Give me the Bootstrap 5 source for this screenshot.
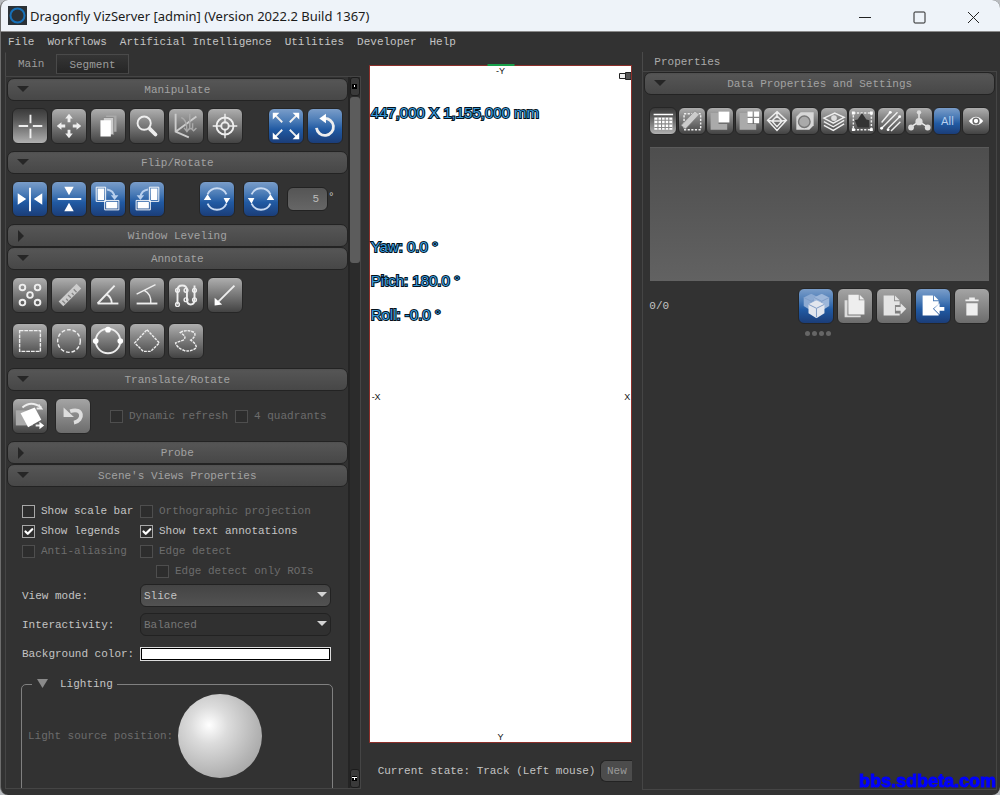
<!DOCTYPE html>
<html lang="en">
<head>
<meta charset="utf-8">
<meta name="viewport" content="width=device-width, initial-scale=1">
<title>Dragonfly VizServer</title>
<link href="https://cdn.jsdelivr.net/npm/bootstrap@5.3.0/dist/css/bootstrap.min.css" rel="stylesheet">
<style>
:root{--ink:#c4c4c4;--dim:#6c6c6c;--soft:#9c9c9c;--base:#323232;--line:#4a4a4a}
body{font:11px/16px "Liberation Mono",monospace;color:var(--ink);background:#b9bcc0}
.window{height:100vh;background:var(--base);border-left:1px solid #6d6d6d;border-radius:8px;overflow:hidden}
.titlebar{height:32px;background:#eef3f9;color:#1b1b1b;font:13px/20px "Noto Sans",sans-serif;padding-left:7px;border-bottom:1px solid #8a8a8a}
.titlebar svg.logo{margin-right:3px}
.winbtn{width:54px;height:31px;border:0;background:none;padding:0;color:#1b1b1b}
.menubar{height:20px;gap:13px;padding:2px 7px 0}
.menubar a{color:var(--ink);text-decoration:none}
.workspace{display:grid;grid-template-columns:36fr 28fr 36fr;min-height:0}
.leftpane{padding:0 0 6px 4px}
.tabrow{height:24px}
.tabrow button{border:1px solid var(--line);background:none;color:var(--soft);padding:0 12px;height:24px;line-height:23px;border-bottom:0;border-top-color:transparent}
.tabrow .second{height:20px;line-height:20px;margin-top:2px;border-color:var(--line);background:linear-gradient(#353535,#262626);border-bottom:1px solid #444}
.tabrow .first{padding:0 12px;border-right:0}
.framed{border:1px solid #454545;min-height:0}
.stack{padding:1px 0 0 1px;min-width:0;overflow:hidden}
.sechead{height:23px;flex:none;width:100%;border:1px solid #232323;border-radius:7px;background:linear-gradient(#505050,#555 10%,#474747);color:#a2a2a2;padding:0 9px;line-height:20px}
.sechead span{flex:1}
.arrow{width:12px;height:12px;flex:none;fill:#262626;margin-right:-12px}
.tools{height:50px;padding:7px 5px;gap:3px;flex:none}
.tools.tall{height:98px;gap:10px}
.toolrow{gap:3px}
.tool{width:36px;height:36px;flex:none;padding:0;border:1px solid #262626;border-radius:6px;background:linear-gradient(#aeaeae,#888 35%,#434343);color:#eee}
.tool svg{width:34px;height:34px;display:block}
.tool.blue{background:linear-gradient(#7a9dc9,#4a7bb6 35%,#215aa3 60%,#1b3d78)}
.tool.down{background:linear-gradient(#3a3a3a,#555 30%,#b0b0b0)}
.tool.flat{background:linear-gradient(#a4a4a4,#6c6c6c)}
.tool.mini{width:28px;height:28px}
.tool.mini svg{width:26px;height:26px}
.tool.alltext{font-family:Lato,sans-serif;color:#b9d0ee}
svg .s{fill:none;stroke:currentColor;stroke-width:2}
.angle{width:41px;height:24px;border:1px solid #222;border-radius:6px;background:linear-gradient(#555,#666);color:#bbb;text-align:right;padding:0 8px}
.degree{align-self:flex-start;margin-top:8px}
.tick{min-height:20px;padding:0;margin:0;display:flex;align-items:center;gap:6px;color:var(--ink)}
.tick .form-check-input{float:none;margin:0;width:13px;height:13px;border-radius:0;border:1px solid #a8a8a8;background-color:#2d2d2d;background-size:15px;flex:none}
.tick .form-check-input:disabled{border-color:#4e4e4e;opacity:1}
.tick .form-check-input:disabled~label{opacity:1;color:var(--dim)}
.options{padding:14px 17px 0 15px}
.checks,.fields{display:grid;grid-template-columns:118px 1fr}
.fields{margin-top:3px;row-gap:6px;grid-auto-rows:23px;align-items:center}
.combo{height:23px;border:1px solid #222;border-radius:6px;color:var(--ink);padding:0 20px 0 3px;appearance:none;font-size:11px;line-height:20px;background:linear-gradient(#444,#525252)}
.combo:disabled{background:#303030;color:#777;opacity:1}
.combowrap{position:relative}
.combowrap svg{position:absolute;right:4px;top:7px;width:10px;height:8px;fill:#d4d4d4;pointer-events:none}
.swatch{height:14px;border:1px solid #ddd;background:#fff;box-shadow:inset 0 0 0 1px #000;padding:0}
.lighting{border:1px solid #808080;border-radius:5px;margin:11px -2px 0 -1px;padding:2px 6px 30px}
.lighting legend{float:none;width:auto;font-size:11px;line-height:16px;margin:0 0 0 4px;padding:0 4px 0 2px;color:var(--ink)}
.lighting legend svg{margin-right:10px}
.source{color:var(--dim);gap:5px}
.ball{width:84px;height:84px;border-radius:50%;background:radial-gradient(circle at 37% 37%,#fff,#dcdcdc 25%,#b4b4b4 65%,#949494)}
.scroller{width:12px;background:#2b2b2b;border-left:2px solid #242424;flex:none}
.scroller .end{height:19px;border:1px solid #1c1c1c;border-radius:3px;background:#3a3a3a;padding:0;line-height:0}
.scroller .thumb{height:166px;margin-top:1px;background:#5c5c5c;border-radius:3px}
.viewpane{padding:13px 8px 5px}
.view{position:relative;background:#fff;border:1px solid #8c2f2a;color:#111;font:9px/10px "Liberation Sans",sans-serif}
.view .mark-n{position:absolute}
.north{left:50%;top:0;transform:translateX(-50%)}
.north::before{content:"";position:absolute;width:27px;height:2px;left:50%;margin-left:-13px;top:-2px;background:#18a04a}
.south{left:50%;bottom:0;transform:translateX(-50%)}
.west{left:2px;top:50%;margin-top:-12px}
.east{right:1px;top:50%;margin-top:-12px}
.cam{right:0;top:6px;width:12px;height:8px}
.readout{font:15px/34px "Liberation Sans",sans-serif;color:#3a9bdc;-webkit-text-stroke:2px #04121c;padding:30px 0 0 1px;paint-order:stroke fill}
.readout .spin{margin-top:100px}
.status{height:47px;padding:17px 0 0 9px;flex:none;align-items:flex-start}
.status .state{line-height:22px}
.newbtn{width:32px;height:22px;border:1px solid #232323;border-right:0;border-radius:6px 0 0 6px;background:#4c4c4c;color:#999;padding:0}
.rightpane{padding:0 3px 5px 2px}
.proptab{height:19px;padding-left:11px;border-left:1px solid var(--line);line-height:20px;color:#aaa}
.rightbody{padding:0 1px}
.pad{padding:12px 5px 0}
.mtools{margin-bottom:12px}
.objects{height:134px;margin:0 1px;background:linear-gradient(#4e4e4e,#626262);border-top:1px solid #5a5a5a}
.actions{gap:3px;margin-top:7px}
.dots i{width:5px;height:5px;border-radius:50%;background:#666}
.dots{gap:2px;padding:7px 0 0 156px}
.site{position:fixed;right:4px;bottom:1px;font:bold 18px/26px "Liberation Sans",sans-serif;color:#00f;-webkit-text-stroke:1px #00f}
</style>
</head>
<body>
<svg class="d-none" xmlns="http://www.w3.org/2000/svg">
<symbol id="down" viewBox="0 0 12 12"><path d="M0 2h12l-6 6z"/></symbol>
<symbol id="right" viewBox="0 0 12 12"><path d="M1 0l6 6-6 6z"/></symbol>
<symbol id="cross" viewBox="0 0 36 36"><path class="s" d="M6 18h10M21 18h10M18.500 6v9M18.500 21v10"/></symbol>
<symbol id="move" viewBox="0 0 36 36"><path class="s" d="M8 18h6M22 18h6M18 8v6M18 22v6" style="stroke-width:3"/><path fill="currentColor" d="M18 5l4 5h-8zM18 31l4-5h-8zM5 18l5-4v8zM31 18l-5-4v8z"/></symbol>
<symbol id="pages" viewBox="0 0 36 36"><path fill="#aaa" d="M16 7h11v17H16z"/><path fill="#ccc" d="M13 9h11v18H13z" stroke="#888"/><path fill="#fff" d="M10 12h11v17H10z"/></symbol>
<symbol id="lens" viewBox="0 0 36 36"><circle class="s" cx="15" cy="15" r="7"/><path d="M21 21l6 6" stroke="currentColor" stroke-width="4" stroke-linecap="round"/></symbol>
<symbol id="axes" viewBox="0 0 36 36"><g fill="none" stroke="#ccc" stroke-width="2"><path d="M7 5v19l14 6M7 24L29 8"/><path d="M13 9q6 2 6 14M22 5v17M16 20l3 4 3-4M25 15v6M23 20l3 3 3-3" stroke="#aaa" stroke-width="1.500"/></g></symbol>
<symbol id="target" viewBox="0 0 36 36"><circle class="s" cx="18" cy="18" r="9"/><circle class="s" cx="18" cy="18" r="4"/><path class="s" style="stroke-width:1.500" d="M5 18h10M21 18h10M18 5v10M18 21v10"/></symbol>
<symbol id="expand" viewBox="0 0 36 36"><path class="s" d="M6 6l8 8M30 6l-8 8M6 30l8-8M30 30l-8-8"/><path fill="#fff" d="M4 4h7l-7 7zM32 4h-7l7 7zM4 32h7l-7-7zM32 32h-7l7-7z"/></symbol>
<symbol id="reset" viewBox="0 0 36 36"><path class="s" style="stroke-width:3" d="M17 10a9 9 0 1 1-8 10"/><path fill="#fff" d="M12 10l7-5v10z"/></symbol>
<symbol id="fliph" viewBox="0 0 36 36"><path fill="#fff" d="M17 6h2v25h-2zM5 12l9 6-9 6zM31 12l-9 6 9 6z"/></symbol>
<symbol id="flipv" viewBox="0 0 36 36"><path fill="#fff" d="M6 17h25v2H6zM13 5l5 9 5-9zM13 31l5-9 5 9z"/></symbol>
<symbol id="turn" viewBox="0 0 36 36"><path fill="none" stroke="#fff" d="M5.500 5.500h10v15h-10zM14.500 19.500h15v10h-15z"/><path fill="#fff" d="M7 7h7v12H7zM16 21h12v7H16z"/><path d="M17 8q7 1 8 8" fill="none" stroke="#b9d0ee" stroke-width="2"/><path fill="#b9d0ee" d="M21 14h8l-4 5z"/></symbol>
<symbol id="spin" viewBox="0 0 36 36"><path fill="none" stroke="#c8daf2" stroke-width="2" d="M8 13a11 11 0 0 1 20 0M28 23a11 11 0 0 1-20 0"/><path fill="#fff" d="M4 19l4-6 4 6zM25 17h7l-4 6z"/></symbol>
<symbol id="points" viewBox="0 0 36 36"><g class="s"><circle cx="10" cy="10" r="3"/><circle cx="26" cy="10" r="3"/><circle cx="18" cy="18" r="3"/><circle cx="10" cy="26" r="3"/><circle cx="26" cy="26" r="3"/></g></symbol>
<symbol id="ruler" viewBox="0 0 36 36"><path fill="#ccc" d="M7 25L26 6l5 5-19 19z"/><path stroke="#888" stroke-width="1.500" d="M14 27l-3-3M17 24l-2-2M20 21l-3-3M23 18l-2-2M26 15l-3-3"/></symbol>
<symbol id="ang" viewBox="0 0 36 36"><path class="s" d="M7 27L25 8M16 17q6 3 6 10"/><path class="s" d="M7 27h22"/></symbol>
<symbol id="ang2" viewBox="0 0 36 36"><path class="s" style="stroke-width:1.500" d="M7 17L27 7M15 13q8 4 7 14"/><path class="s" d="M7 27h22"/></symbol>
<symbol id="curve" viewBox="0 0 36 36"><path class="s" d="M9 28V13q0-5 5-5t5 5v10q0 5 4 5t4-5V8"/><g class="s" style="stroke-width:1.500"><circle cx="9" cy="28" r="2"/><circle cx="9" cy="13" r="2"/><circle cx="18" cy="13" r="2"/><circle cx="18" cy="23" r="2"/><circle cx="27" cy="13" r="2"/><circle cx="27" cy="23" r="2"/></g></symbol>
<symbol id="arr" viewBox="0 0 36 36"><path class="s" d="M28 8L11 25"/><path fill="#fff" d="M7 29v-8l8 7z"/></symbol>
<symbol id="dsq" viewBox="0 0 36 36"><path class="s" style="stroke-width:1.500" stroke-dasharray="4 1" d="M7 7h22v22H7z"/></symbol>
<symbol id="dcirc" viewBox="0 0 36 36"><circle class="s" style="stroke-width:1.500" stroke-dasharray="4 2" cx="18" cy="18" r="12"/></symbol>
<symbol id="circ3" viewBox="0 0 36 36"><circle class="s" cx="18" cy="18" r="13"/><g fill="#fff"><circle cx="18" cy="6" r="3"/><circle cx="5" cy="18" r="3"/><circle cx="31" cy="18" r="3"/></g></symbol>
<symbol id="dpoly" viewBox="0 0 36 36"><path class="s" style="stroke-width:1.500" stroke-dasharray="3 1" d="M18 6l13 14-9 9h-8l-9-9z"/></symbol>
<symbol id="dfree" viewBox="0 0 36 36"><path class="s" style="stroke-width:1.500" stroke-dasharray="3 1" d="M12 9q7-4 15 0 2 4-4 8 6 4 6 8-6 5-13 3-8-3-9-8l8-3q5-3-3-8z"/></symbol>
<symbol id="tilt" viewBox="0 0 36 36"><path fill="#aaa" d="M3 12h18v16H3z"/><path fill="#fff" d="M8 15l15-6 7 13-14 8z"/><path class="s" d="M10 9q9-8 20 0M27 6l3 4h-5M24 28h7"/><path fill="#fff" d="M28 24l5 4-5 4z"/></symbol>
<symbol id="undo" viewBox="0 0 36 36"><path fill="none" stroke="#ddd" stroke-width="4" d="M15 13c14-5 15 10 4 12"/><path fill="#ddd" d="M8 9v10h11z"/></symbol>
<symbol id="tbl" viewBox="0 0 36 36"><path fill="#fff" d="M5 8h27v2H5zM6 13h25v17H6z"/><path stroke="#888" stroke-width="1.500" d="M6 17h25M6 22h25M6 27h25M11 12v18M16 12v18M21 12v18M26 12v18"/></symbol>
<symbol id="rsq" viewBox="0 0 36 36"><path class="s" stroke-dasharray="3 2" d="M7 8h23v22H7z"/><path fill="#ccc" stroke="#888" d="M3 24L22 4l6 5L9 29z"/></symbol>
<symbol id="two" viewBox="0 0 36 36"><path fill="#aaa" d="M5 7h11v15h12v8H5z"/><path fill="#fff" d="M16 5h15v15H16z"/></symbol>
<symbol id="four" viewBox="0 0 36 36"><path fill="#aaa" d="M5 7h11v15h12v8H5z"/><path fill="#fff" d="M16 5h7v7h-7zM25 5h7v7h-7zM16 14h7v7h-7zM25 14h7v7h-7z"/></symbol>
<symbol id="octa" viewBox="0 0 36 36"><path class="s" d="M18 5l13 12-13 14L5 17zM18 11l-7 7h14zM11 18l7 8 7-8M18 5v6M5 17l6 1M31 17l-6 1"/></symbol>
<symbol id="cubeo" viewBox="0 0 36 36"><path fill="#d8d8d8" d="M6 12l6-6h18v18l-6 6H6z"/><circle cx="17" cy="19" r="8" fill="#aaa" stroke="#777" stroke-width="2"/></symbol>
<symbol id="layers" viewBox="0 0 36 36"><path class="s" d="M4 14l15-7 13 6-15 8zM4 19l13 7 15-9M4 24l13 7 15-9"/><circle cx="18" cy="14" r="4" fill="#ddd"/></symbol>
<symbol id="shape" viewBox="0 0 36 36"><path class="s" stroke-dasharray="3 2" d="M6 7h25v23H6z"/><path fill="#333" d="M8 17l4-1 6-9 6 9 4 1v10H12z"/><path fill="#fff" d="M4 5h4v4H4zM29 5h4v4h-4zM4 28h4v4H4zM29 28h4v4h-4z"/></symbol>
<symbol id="fibers" viewBox="0 0 36 36"><path class="s" d="M5 20L17 6M5 28L27 6M14 28L30 12M18 32l13-13"/><g fill="#fff"><circle cx="5" cy="28" r="2"/><circle cx="17" cy="6" r="2"/><circle cx="30" cy="12" r="2"/><circle cx="14" cy="30" r="2"/></g></symbol>
<symbol id="graph" viewBox="0 0 36 36"><path class="s" d="M18 7v12M18 19L7 26M18 19l12 7"/><g fill="#ddd"><circle cx="18" cy="6" r="3"/><circle cx="18" cy="19" r="5"/><circle cx="7" cy="27" r="4"/><circle cx="30" cy="27" r="4"/></g></symbol>
<symbol id="eye" viewBox="0 0 36 36"><path fill="#fff" d="M8 18q10-12 20 0-10 12-20 0z"/><circle cx="18" cy="18" r="4" fill="none" stroke="#666" stroke-width="2"/></symbol>
<symbol id="cube" viewBox="0 0 18 18"><path d="M9 0l8 4v9l-8 5-8-5V4z"/><path d="M1 4l8 4 8-4M9 8v9" fill="none" stroke="#7f9cc6"/></symbol>
<symbol id="cubes" viewBox="0 0 36 36"><use href="#cube" x="4" y="5" width="18" height="18" fill="#8caad2"/><use href="#cube" x="15" y="5" width="18" height="18" fill="#9db7da"/><use href="#cube" x="9" y="12" width="19" height="19" fill="#e2e6ee"/></symbol>
<symbol id="copy" viewBox="0 0 36 36"><path fill="#ddd" d="M7 12h3v16h14v2H7z"/><path fill="#eee" d="M11 6h11v6h6v15H11z"/><path fill="#eee" d="M23 6l5 5h-5z"/></symbol>
<symbol id="exp" viewBox="0 0 36 36"><path fill="#e4e4e4" d="M7 7h11v6h6v4h-5v9h5v2H7zM19 7l5 5h-5zM20 19h5v-4l6 6-6 6v-4h-5z"/></symbol>
<symbol id="imp" viewBox="0 0 36 36"><path fill="#fff" d="M7 7h11v6h6v3l-6 5 6 6v1H7zM19 7l5 5h-5zM30 19h-5v-4l-6 6 6 6v-4h5z"/></symbol>
<symbol id="bin" viewBox="0 0 36 36"><path fill="#eee" d="M11 11h14v2H11zM15 9h6v2h-6zM12 15h12v13H12z"/></symbol>
</svg>

<div class="window d-flex flex-column">
<header class="titlebar d-flex align-items-center flex-shrink-0">
<svg width="19" height="19" class="logo"><rect width="19" height="19" fill="#2b3136"/><circle cx="9.500" cy="9.500" r="7" fill="none" stroke="#1670b8" stroke-width="2"/></svg>
<span class="me-auto">Dragonfly VizServer [admin] (Version 2022.2 Build 1367)</span>
<button class="winbtn" aria-label="Minimize"><svg width="13" height="13"><path d="M0 6.500h12" stroke="#222"/></svg></button>
<button class="winbtn" aria-label="Maximize"><svg width="13" height="13"><rect x="1" y="1" width="11" height="11" rx="1" fill="none" stroke="#222"/></svg></button>
<button class="winbtn" aria-label="Close"><svg width="13" height="13"><path d="M1 1l11 11M12 1L1 12" stroke="#222"/></svg></button>
</header>
<nav class="menubar d-flex flex-shrink-0"><a href="#">File</a><a href="#">Workflows</a><a href="#">Artificial Intelligence</a><a href="#">Utilities</a><a href="#">Developer</a><a href="#">Help</a></nav>

<main class="workspace flex-grow-1">
<section class="leftpane d-flex flex-column overflow-hidden">
<div class="tabrow d-flex flex-shrink-0"><button class="first">Main</button><button class="second">Segment</button></div>
<div class="framed d-flex flex-grow-1">
<div class="stack flex-grow-1">
<button class="sechead d-flex align-items-center"><svg class="arrow"><use href="#down"/></svg><span>Manipulate</span></button>
<div class="tools d-flex">
<button class="tool down" aria-label="Track"><svg><use href="#cross"/></svg></button>
<button class="tool" aria-label="Pan"><svg><use href="#move"/></svg></button>
<button class="tool" aria-label="Slices"><svg><use href="#pages"/></svg></button>
<button class="tool" aria-label="Zoom"><svg><use href="#lens"/></svg></button>
<button class="tool" aria-label="Axes"><svg><use href="#axes"/></svg></button>
<button class="tool" aria-label="Target"><svg><use href="#target"/></svg></button>
<button class="tool blue ms-auto" aria-label="Fit"><svg><use href="#expand"/></svg></button>
<button class="tool blue" aria-label="Reset"><svg><use href="#reset"/></svg></button>
</div>
<button class="sechead d-flex align-items-center"><svg class="arrow"><use href="#down"/></svg><span>Flip/Rotate</span></button>
<div class="tools d-flex">
<button class="tool blue" aria-label="Flip horizontally"><svg><use href="#fliph"/></svg></button>
<button class="tool blue" aria-label="Flip vertically"><svg><use href="#flipv"/></svg></button>
<button class="tool blue" aria-label="Turn right"><svg><use href="#turn"/></svg></button>
<button class="tool blue" aria-label="Turn left"><svg viewBox="0 0 36 36"><use href="#turn" width="36" height="36" transform="matrix(-1 0 0 1 36 0)"/></svg></button>
<div class="d-flex gap-1 ms-auto pe-2">
<button class="tool blue" aria-label="Rotate right"><svg><use href="#spin"/></svg></button>
<button class="tool blue ms-1" aria-label="Rotate left"><svg viewBox="0 0 36 36"><use href="#spin" width="36" height="36" transform="matrix(-1 0 0 1 36 0)"/></svg></button>
<label class="d-flex align-items-center ps-1"><input class="angle" value="5" aria-label="Angle"><span class="degree">°</span></label>
</div>
</div>
<button class="sechead d-flex align-items-center"><svg class="arrow"><use href="#right"/></svg><span>Window Leveling</span></button>
<button class="sechead d-flex align-items-center"><svg class="arrow"><use href="#down"/></svg><span>Annotate</span></button>
<div class="tools tall d-flex flex-column">
<div class="toolrow d-flex">
<button class="tool" aria-label="Points"><svg><use href="#points"/></svg></button>
<button class="tool" aria-label="Ruler"><svg><use href="#ruler"/></svg></button>
<button class="tool" aria-label="Angle"><svg><use href="#ang"/></svg></button>
<button class="tool" aria-label="Open angle"><svg><use href="#ang2"/></svg></button>
<button class="tool" aria-label="Path"><svg><use href="#curve"/></svg></button>
<button class="tool" aria-label="Arrow"><svg><use href="#arr"/></svg></button>
</div>
<div class="toolrow d-flex">
<button class="tool" aria-label="Rectangle"><svg><use href="#dsq"/></svg></button>
<button class="tool" aria-label="Ellipse"><svg><use href="#dcirc"/></svg></button>
<button class="tool" aria-label="Circle"><svg><use href="#circ3"/></svg></button>
<button class="tool" aria-label="Polygon"><svg><use href="#dpoly"/></svg></button>
<button class="tool" aria-label="Freehand"><svg><use href="#dfree"/></svg></button>
</div>
</div>
<button class="sechead d-flex align-items-center"><svg class="arrow"><use href="#down"/></svg><span>Translate/Rotate</span></button>
<div class="tools d-flex">
<button class="tool" aria-label="Transform"><svg><use href="#tilt"/></svg></button>
<button class="tool flat ms-1" aria-label="Undo"><svg><use href="#undo"/></svg></button>
<div class="tick form-check ms-3"><input class="form-check-input" type="checkbox" id="dyn" disabled><label for="dyn">Dynamic refresh</label></div>
<div class="tick form-check ms-1"><input class="form-check-input" type="checkbox" id="quad" disabled><label for="quad">4 quadrants</label></div>
</div>
<button class="sechead d-flex align-items-center"><svg class="arrow"><use href="#right"/></svg><span>Probe</span></button>
<button class="sechead d-flex align-items-center"><svg class="arrow"><use href="#down"/></svg><span>Scene's Views Properties</span></button>
<div class="options">
<div class="checks">
<div class="tick form-check"><input class="form-check-input" type="checkbox" id="c1"><label for="c1">Show scale bar</label></div>
<div class="tick form-check"><input class="form-check-input" type="checkbox" id="c2" disabled><label for="c2">Orthographic projection</label></div>
<div class="tick form-check"><input class="form-check-input" type="checkbox" id="c3" checked><label for="c3">Show legends</label></div>
<div class="tick form-check"><input class="form-check-input" type="checkbox" id="c4" checked><label for="c4">Show text annotations</label></div>
<div class="tick form-check"><input class="form-check-input" type="checkbox" id="c5" disabled><label for="c5">Anti-aliasing</label></div>
<div class="tick form-check"><input class="form-check-input" type="checkbox" id="c6" disabled><label for="c6">Edge detect</label></div>
<span></span>
<div class="tick form-check ms-3"><input class="form-check-input" type="checkbox" id="c7" disabled><label for="c7">Edge detect only ROIs</label></div>
</div>
<div class="fields">
<label for="vm">View mode:</label><div class="combowrap"><select class="combo w-100 d-block" id="vm"><option>Slice</option></select><svg viewBox="0 0 10 8"><path d="M0 1h10L5 6z"/></svg></div>
<label for="ia">Interactivity:</label><div class="combowrap"><select class="combo w-100 d-block" id="ia" disabled><option>Balanced</option></select><svg viewBox="0 0 10 8"><path d="M0 1h10L5 6z"/></svg></div>
<label for="bg">Background color:</label><button class="swatch" id="bg" aria-label="Background color"></button>
</div>
<fieldset class="lighting">
<legend><svg width="16" height="10"><path d="M3 0h11L8.500 9z" fill="#8a8a8a"/></svg>Lighting</legend>
<div class="source d-flex align-items-center">Light source position:<div class="ball"></div></div>
</fieldset>
</div>
</div>
<div class="scroller d-flex flex-column"><button class="end" aria-label="Scroll up"><svg width="5" height="5"><path d="M0 0h5v5H0z"/><path fill="#fff" d="M2 1h1v2H2z"/></svg></button><div class="thumb"></div><button class="end mt-auto" aria-label="Scroll down"><svg width="5" height="5"><path d="M0 0h5v5H0z"/><path fill="#fff" d="M0 1h5v1H3v2H2V2H0z"/></svg></button></div>
</div>
</section>

<section class="viewpane d-flex flex-column">
<div class="view flex-grow-1">
<span class="mark-n north">-Y</span><span class="mark-n south">Y</span><span class="mark-n west">-X</span><span class="mark-n east">X</span>
<svg class="mark-n cam" viewBox="0 0 12 8"><path fill="#eee" stroke="#222" d="M.5 1.500h6v5h-6z"/><path fill="#555" stroke="#222" d="M6.500.5H12v7H6.500z"/></svg>
<div class="readout"><div>447,000 X 1,155,000 mm</div><div class="spin">Yaw: 0.0 °</div><div>Pitch: 180.0 °</div><div>Roll: -0.0 °</div></div>
</div>
<div class="status d-flex justify-content-between"><span class="state">Current state: Track (Left mouse)</span><button class="newbtn">New</button></div>
</section>

<section class="rightpane d-flex flex-column">
<div class="proptab flex-shrink-0">Properties</div>
<div class="framed rightbody flex-grow-1">
<button class="sechead d-flex align-items-center"><svg class="arrow"><use href="#down"/></svg><span>Data Properties and Settings</span></button>
<div class="pad">
<div class="mtools d-flex justify-content-between">
<button class="tool mini down" aria-label="Table"><svg><use href="#tbl"/></svg></button>
<button class="tool mini" aria-label="Annotations"><svg><use href="#rsq"/></svg></button>
<button class="tool mini" aria-label="Regions"><svg><use href="#two"/></svg></button>
<button class="tool mini" aria-label="Multi regions"><svg><use href="#four"/></svg></button>
<button class="tool mini" aria-label="Meshes"><svg><use href="#octa"/></svg></button>
<button class="tool mini" aria-label="Volumes"><svg><use href="#cubeo"/></svg></button>
<button class="tool mini" aria-label="Layers"><svg><use href="#layers"/></svg></button>
<button class="tool mini" aria-label="Shapes"><svg><use href="#shape"/></svg></button>
<button class="tool mini" aria-label="Vectors"><svg><use href="#fibers"/></svg></button>
<button class="tool mini" aria-label="Graphs"><svg><use href="#graph"/></svg></button>
<button class="tool mini blue alltext">All</button>
<button class="tool mini" aria-label="Visible"><svg><use href="#eye"/></svg></button>
</div>
<div class="objects"></div>
<div class="actions d-flex align-items-center"><span class="me-auto">0/0</span>
<button class="tool blue" aria-label="Volume"><svg><use href="#cubes"/></svg></button>
<button class="tool flat" aria-label="Duplicate"><svg><use href="#copy"/></svg></button>
<button class="tool flat" aria-label="Export"><svg><use href="#exp"/></svg></button>
<button class="tool blue" aria-label="Import"><svg><use href="#imp"/></svg></button>
<button class="tool flat" aria-label="Delete"><svg><use href="#bin"/></svg></button>
</div>
<div class="dots d-flex"><i></i><i></i><i></i><i></i></div>
</div>
</div>
</section>
</main>
</div>
<div class="site">bbs.sdbeta.com</div>
<script src="https://cdn.jsdelivr.net/npm/bootstrap@5.3.0/dist/js/bootstrap.bundle.min.js"></script>
</body>
</html>
